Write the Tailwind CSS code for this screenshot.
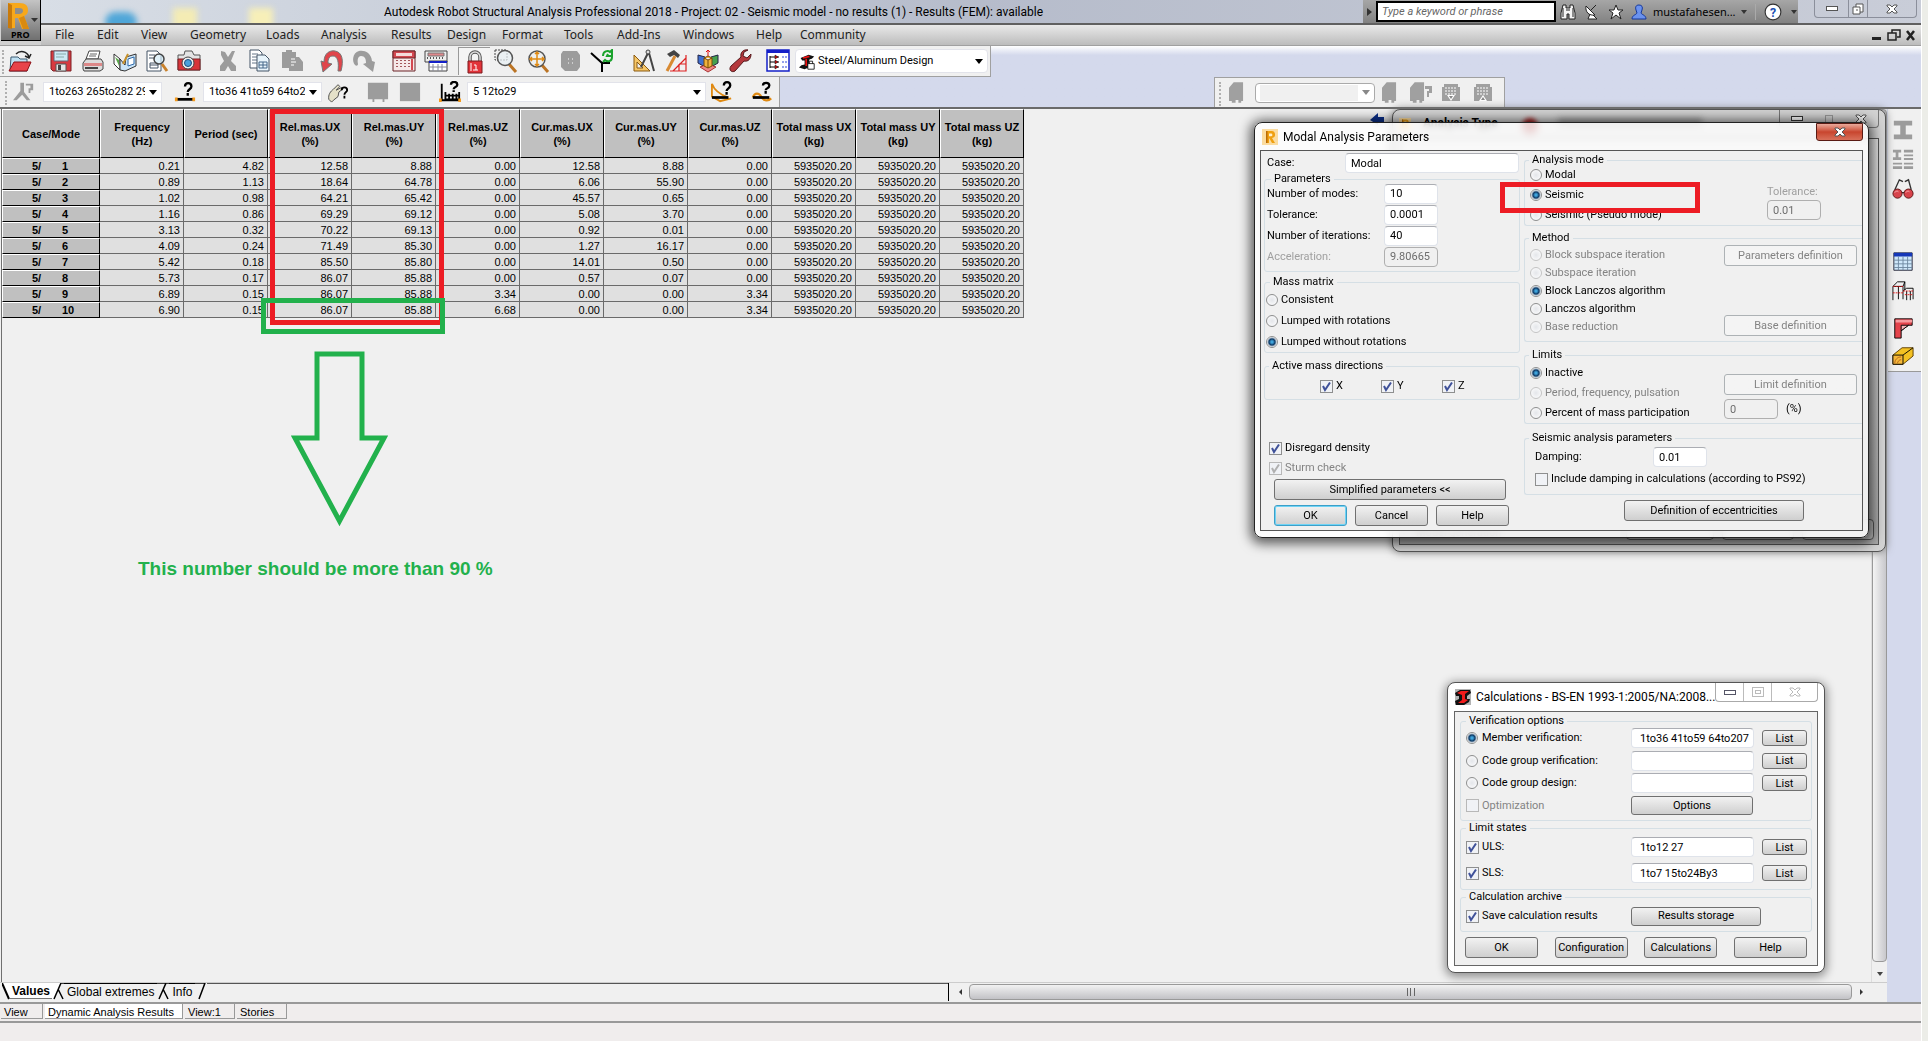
<!DOCTYPE html>
<html lang="en">
<head>
  <meta charset="UTF-8" />
  <title>Autodesk Robot Structural Analysis Professional 2018</title>
  <script src="https://cdn.jsdelivr.net/npm/@tailwindcss/browser@4"></script>
</head>
<body class="h-screen overflow-hidden flex bg-[#ecede8] text-black font-['Roboto',sans-serif] text-[11px] leading-[14px]">

  <!-- shared symbols -->
  <svg class="hidden">
    <symbol id="tick" viewBox="0 0 13 13"><path d="M3 6l2 4 5-7.500" fill="none" stroke="#3f5199" stroke-width="2" /></symbol>
    <symbol id="tickOff" viewBox="0 0 13 13"><path d="M3 6l2 4 5-7.500" fill="none" stroke="#b0b0b0" stroke-width="2" /></symbol>
    <symbol id="robot" viewBox="0 0 16 16">
      <rect width="16" height="16" fill="#fbdca0" />
      <path d="M4 14V2h5a3.500 3.500 0 0 1 1 7l3 5h-3L7.500 9.500H7V14z" fill="#f0a010" />
      <path d="M7 4.500h2a1.300 1.300 0 0 1 0 2.800H7z" fill="#fff0cc" />
      <path d="M4 14V2h1.500v12z" fill="#b96b06" />
    </symbol>
    <symbol id="cross" viewBox="0 0 12 10"><path d="M1 1h3l2 2 2-2h3v1L8 5l3 3v1H8L6 7 4 9H1V8l3-3-3-3z" fill="#fff" stroke="#555" /></symbol>
    <symbol id="sheet" viewBox="0 0 16 22"><path d="M5 0h10v20h-2v2h-3v-3H7v3H3v-2H0V6z" fill="#a0a0a0" /></symbol>
  </svg>

  <div class="flex-1 min-w-0 flex flex-col">

    <!-- title bar and menu -->
    <header class="flex bg-[#d0d0d0] border-b border-[#a0a0a0]">
      <button class="ml-px w-10 h-[41px] border-r border-b border-black bg-linear-to-b from-[#c4c4c4] to-[#707070] relative" aria-label="Application menu">
        <svg viewBox="0 0 40 40" class="w-10 h-10">
          <path d="M7 28V3h11c7 0 9 3 9 7 0 3-1 5-4 6l5 13h-7l-4-11h-3v10z" fill="#f7a81b" />
          <path d="M7 3l4 2v24l-4-1z" fill="#c97a0a" />
          <path d="M14 8h4c3 0 4 1 4 3s-2 3-4 3h-4z" fill="#8e8e8e" />
          <path d="M18 18l4 11h6l-5-13z" fill="#d98a10" />
          <path d="M30 18h7l-3.500 4z" fill="#333" />
          <text x="10" y="38" font-size="9" font-weight="700" font-family="Noto Sans">PRO</text>
        </svg>
      </button>
      <div class="flex-1 min-w-0">
        <div class="h-[25px] flex items-stretch border-b-2 border-[#606060] bg-linear-to-r from-[#d8dee6] via-[#b6bccb] to-[#c9cdd8] relative overflow-hidden">
          <span class="absolute left-16 top-3 w-8 h-5 rounded-full bg-[#4fa6d8] blur-[3px]"></span>
          <span class="absolute left-33 top-2 w-6 h-6 bg-[#f4ecb4] blur-[3px]"></span>
          <span class="absolute left-52 top-2 w-6 h-6 bg-[#f7efb8] blur-[3px]"></span>
          <h1 class="flex-1 min-w-0 pl-[343px] text-[12px] leading-6 whitespace-nowrap relative">Autodesk Robot Structural Analysis Professional 2018 - Project: 02 - Seismic model - no results (1) - Results (FEM): available</h1>
          <div class="w-[435px] shrink-0 flex items-center bg-linear-to-b from-[#a6a6a6] to-[#828282] [&_svg]:mx-auto [&>*]:shrink-0">
            <svg viewBox="0 0 13 12" class="w-[13px] h-3 mx-0!"><path d="M4 2v8l5-4z" fill="#333" /></svg>
            <input type="text" aria-label="Search" placeholder="Type a keyword or phrase" class="w-[180px] h-[21px] px-1 bg-white border-2 border-black text-[11px] italic placeholder:text-[#666]" />
            <button class="w-6" aria-label="Find"><svg viewBox="0 0 16 16" class="size-4"><path d="M3 1h3v3h4V1h3l2 8v6H9v-5H7v5H1V9z" fill="#f4f4f4" stroke="#222" /><path d="M3 4v9M13 4v9M6 6h4" stroke="#222" /></svg></button>
            <button class="w-6" aria-label="Subscription"><svg viewBox="0 0 16 16" class="size-4"><path d="M2 2c-1 6 3 10 9 9zM6 10l-2 5h9l-4-4M7 6l5-5" fill="#fff" stroke="#222" /></svg></button>
            <button class="w-6" aria-label="Favourites"><svg viewBox="0 0 16 16" class="size-4"><path d="M8 1l2 5h5l-4 3 2 6-5-4-5 4 2-6-4-3h5z" fill="#fff" stroke="#222" /></svg></button>
            <button class="w-[124px] pl-[3px] flex items-center whitespace-nowrap font-['Noto_Sans',sans-serif]"><svg viewBox="0 0 16 16" class="size-4 ml-0! mr-[6px]!"><path d="M8 1c3 0 4 2 3 5l-1 3c1 2 5 2 5 6H1c0-4 4-4 5-6L5 6C4 3 5 1 8 1z" fill="#6b92ee" stroke="#16389a" /></svg>mustafahesen...<svg viewBox="0 0 8 6" class="w-2"><path d="M1 1h6L4 5z" fill="#333" /></svg></button>
            <span class="ml-[3px] h-4 border-l border-[#aaa]"></span>
            <button class="ml-2 flex items-center gap-2" aria-label="Help"><svg viewBox="0 0 16 16" class="size-[18px]"><circle cx="8" cy="8" r="7" fill="#fff" stroke="#333" /><text x="8" y="12" text-anchor="middle" font-size="11" font-weight="700" fill="#1b4fb4">?</text></svg><svg viewBox="0 0 8 6" class="w-2"><path d="M1 1h6L4 5z" fill="#333" /></svg></button>
          </div>
          <div class="ml-4 mr-1 w-[103px] h-[18px] shrink-0 flex border border-t-0 border-[#8b8f9b] rounded-b divide-x divide-[#8b8f9b]">
            <button class="w-[34px] grid place-items-center" aria-label="Minimize"><span class="w-3 h-[5px] bg-white border border-[#555]"></span></button>
            <button class="w-[19px] grid place-items-center" aria-label="Restore"><svg viewBox="0 0 12 12" class="size-3"><path d="M4 1h7v8H8v2H1V4h3zM4 4h4v5M4 7h2" fill="#fff" stroke="#555" /></svg></button>
            <button class="flex-1 grid place-items-center" aria-label="Close"><svg class="w-3 h-[10px]"><use href="#cross" /></svg></button>
          </div>
        </div>
        <nav class="h-5 flex items-center bg-linear-to-b from-[#e9e9e9] to-[#bcbcbc] text-[12px] text-[#222] font-['Noto_Sans',sans-serif]">
          <a href="#" class="ml-[14px] w-[42px]">File</a>
          <a href="#" class="w-11">Edit</a>
          <a href="#" class="w-[49px]">View</a>
          <a href="#" class="w-[76px]">Geometry</a>
          <a href="#" class="w-[55px]">Loads</a>
          <a href="#" class="w-[70px]">Analysis</a>
          <a href="#" class="w-14">Results</a>
          <a href="#" class="w-[55px]">Design</a>
          <a href="#" class="w-[62px]">Format</a>
          <a href="#" class="w-[53px]">Tools</a>
          <a href="#" class="w-[66px]">Add-Ins</a>
          <a href="#" class="w-[73px]">Windows</a>
          <a href="#" class="w-11">Help</a>
          <a href="#">Community</a>
          <svg viewBox="0 0 46 14" class="ml-auto mr-1 w-[46px] h-[14px]"><path d="M1 9h9v3H1z" fill="#222" /><path d="M21 5V2h8v7h-3M17 5h8v7h-8z" fill="none" stroke="#222" stroke-width="1.500" /><path d="M36 3l7 9M43 3l-7 9" stroke="#222" stroke-width="2.500" /></svg>
        </nav>
      </div>
    </header>

    <!-- toolbars -->
    <div class="bg-linear-to-b from-white via-[#d4d9ec] via-15% to-[#d4d9ec] border-b-2 border-[#6a6a6a]">
      <div class="w-[991px] h-[31px] pl-1 flex items-center bg-[#f0f0f0] border-r border-b border-[#a0a0a0] [&_svg]:size-6 [&_svg]:mx-auto [&>button]:w-8 [&>button]:shrink-0 relative">
        <span class="absolute left-0.5 top-1 h-6 border-l-2 border-dotted border-[#b0b0b0]"></span>
        <button aria-label="Open"><svg viewBox="0 0 24 24"><path d="M3 8h7l2 2h7v12H2z" fill="#bfe0f2" stroke="#3d5a70" /><path d="M6 13h17l-4 9H1z" fill="#e8434a" stroke="#8c1016" /><path d="M8 5c4-4 11-3 13 3m-4-1l4 2 2-4" fill="none" stroke="#222" stroke-width="1.500" /></svg></button>
        <button class="ml-[9px]" aria-label="Save"><svg viewBox="0 0 24 24"><path d="M2 2h20v20H4l-2-2z" fill="#d83a40" stroke="#7c2025" /><path d="M5 2h14v10H5z" fill="#cdeaf6" stroke="#667" /><path d="M7 5h10M7 8h8" stroke="#8aa" /><path d="M7 15h10v7H7z" fill="#e6e6e6" stroke="#555" /><path d="M9 16h3v5H9z" fill="#444" /></svg></button>
        <button aria-label="Print"><svg viewBox="0 0 24 24"><path d="M8 2h11l-2 8H5z" fill="#fff" stroke="#444" /><path d="M9 5h7M8 7h7" stroke="#666" /><path d="M5 10h15l2 3v7l-3 2H3l-1-2v-6z" fill="#dcdcdc" stroke="#444" /><path d="M3 14h18v3H3z" fill="#d88" /><path d="M4 19h13" stroke="#444" stroke-width="2" /></svg></button>
        <button aria-label="Report"><svg viewBox="0 0 24 24"><path d="M1 5l6 5v11l-6-6z" fill="#fff" stroke="#333" /><path d="M2 8l4 3v6z" fill="#5aa84a" /><path d="M7 10l5 6 1-8 10-3v12l-11 5-5-1z" fill="#cbe4f7" stroke="#333" /><path d="M15 10l6-2v7l-6 2z" fill="#fff" stroke="#2a68a8" /><path d="M10 15l5-10" stroke="#c7912b" stroke-width="2" /></svg></button>
        <button aria-label="Preview"><svg viewBox="0 0 24 24"><path d="M2 2h10l4 4v16H2z" fill="#fff" stroke="#456" /><path d="M4 6h6M4 9h6M5 19v-5h8v5zM5 16h8" stroke="#456" fill="none" /><path d="M17 15l5 7" stroke="#c8812b" stroke-width="3" /><circle cx="14" cy="10" r="5" fill="#d2ecf8aa" stroke="#444" stroke-width="1.500" /></svg></button>
        <button aria-label="Screen capture"><svg viewBox="0 0 24 24"><path d="M8 2h7l2 4h6v15H1V6h6z" fill="#e4e4e4" stroke="#555" /><path d="M1 10h22v11H1z" fill="#d8343a" stroke="#7c2025" /><circle cx="11" cy="14" r="6" fill="#eee" stroke="#444" /><circle cx="11" cy="14" r="3.500" fill="#4aa0dc" stroke="#1d4d7c" /></svg></button>
        <button class="ml-[7px]" aria-label="Cut"><svg viewBox="0 0 24 24"><path d="M5 2l4 1 3 5 4-6h3l-4 10 5 5v5h-5l-3-5-3 5H4v-5l4-5-3-6z" fill="#9c9c9c" /></svg></button>
        <button aria-label="Copy"><svg viewBox="0 0 24 24"><path d="M2 1h9l3 3v15H2z" fill="#fff" stroke="#456" /><path d="M4 5h6M4 8h5M4 11h5M4 14h5" stroke="#678" /><path d="M9 6h8l4 4v12H9z" fill="#e8f4fb" stroke="#456" /><path d="M11 13h8v6h-8zM11 16h8M15 13v6" stroke="#468" fill="none" /></svg></button>
        <button aria-label="Paste"><svg viewBox="0 0 24 24"><path d="M2 3h4V1h6v2h4v5h3l4 5v9h-14v-3H2z" fill="#9c9c9c" /><path d="M11 10h4M11 13h5M11 16h3" stroke="#fff" /></svg></button>
        <button class="ml-2" aria-label="Undo"><svg viewBox="0 0 24 24"><path d="M1 12l3 1C4 4 10 1 15 2c7 1 9 9 6 20h-3c1-8 0-15-5-15-4 0-5 3-5 7l4 1-9 8z" fill="#e0454b" stroke="#777" /></svg></button>
        <button aria-label="Redo"><svg viewBox="0 0 24 24"><path d="M23 13l-3-1C19 3 12 1 7 2 0 4 0 13 3 16c1 1 3 1 3-1-1-4 0-8 3-8 4 0 5 3 5 7l-3 1 10 8z" fill="#9c9c9c" /></svg></button>
        <button class="ml-2" aria-label="Calculate"><svg viewBox="0 0 24 24"><path d="M1 2h22v20H1z" fill="#f6e8e8" stroke="#6b2227" /><path d="M1 2h22v7H1z" fill="#d34850" stroke="#6b2227" /><path d="M4 4h16v3H4z" fill="#f4dada" /><path d="M5 11v9M9 11v9M13 11v9M17 11v9" stroke="#a4565a" stroke-width="2" stroke-dasharray="1 2" /><path d="M20 10v11" stroke="#d34850" stroke-width="2" /></svg></button>
        <button aria-label="Calculation table"><svg viewBox="0 0 24 24"><path d="M1 2h22v11H1z" fill="#eee" stroke="#444" /><path d="M4 4h16v3H4z" fill="#e0888c" stroke="#777" /><path d="M3 9h18" stroke="#555" stroke-width="2" stroke-dasharray="1 2" /><path d="M5 12h18v10H5z" fill="#fff" stroke="#444" /><path d="M5 12h18v2H5z" fill="#1420c8" /><path d="M5 18h18M9 15v7M14 15v7M18 15v7" stroke="#889" /></svg></button>
        <span class="ml-[6px] h-7 w-8 grid place-items-center border-l border-t border-[#999] bg-[#f4f4f4]"><button aria-label="Lock results"><svg viewBox="0 0 24 24"><path d="M7 11V7a5 5 0 0 1 10 0v4" fill="none" stroke="#555" stroke-width="3.500" /><path d="M7 11V7a5 5 0 0 1 10 0v4" fill="none" stroke="#ddd" stroke-width="1.500" /><path d="M5 11h14v12H5z" fill="#e2343a" stroke="#7c1a1e" /><path d="M7 13h2v8H7z" fill="#f29a9d" /><path d="M11 15h2v5M10 20h5" stroke="#fff" fill="none" /></svg></button></span>
        <button aria-label="Zoom window"><svg viewBox="0 0 24 24"><path d="M1 1h12v10H1z" fill="#eee" stroke="#444" stroke-dasharray="2 1" /><path d="M15 15l7 8" stroke="#bb7425" stroke-width="3" /><circle cx="11" cy="9" r="7.500" fill="#e8f0f4bb" stroke="#555" stroke-width="1.500" /></svg></button>
        <button aria-label="Zoom all"><svg viewBox="0 0 24 24"><path d="M15 15l7 8" stroke="#bb7425" stroke-width="3" /><circle cx="11" cy="10" r="8" fill="#eef0f0" stroke="#555" stroke-width="1.500" /><path d="M11 3v14M4 10h14M9 5l2-2 2 2M9 15l2 2 2-2M6 8l-2 2 2 2M16 8l2 2-2 2" fill="none" stroke="#e08a12" stroke-width="1.500" /></svg></button>
        <button aria-label="Rotate"><svg viewBox="0 0 24 24"><path d="M5 2h14l3 4v12l-3 4H7l-4-4V5z" fill="#9c9c9c" /><path d="M10 10h1M14 10h1M10 14h1M14 14h1" stroke="#fff" /></svg></button>
        <button aria-label="Redraw axes"><svg viewBox="0 0 24 24"><path d="M1 4l11 10v9M12 14h8" fill="none" stroke="#000" stroke-width="2" /><path d="M13 7c0-5 5-6 7-4l2-2v6h-5l1-2M22 8c0 5-5 5-7 3l-2 2" fill="none" stroke="#1aa32c" stroke-width="2" /></svg></button>
        <button class="ml-[10px]" aria-label="Units"><svg viewBox="0 0 24 24"><path d="M2 6v16h16z" fill="#f6c667" stroke="#8a5a10" /><path d="M5 13v6h6z" fill="#f0f0f0" stroke="#8a5a10" /><path d="M16 4L9 18M17 4l5 18" stroke="#444" stroke-width="2" /><circle cx="16" cy="3" r="2" fill="#ddd" stroke="#444" /></svg></button>
        <button aria-label="Correct model"><svg viewBox="0 0 24 24"><path d="M22 6v16H6M22 9L9 22M15 15v7M15 15h7" stroke="#d22" fill="none" stroke-width="1.200" /><path d="M3 5l7-4 6 5-2 3-4-3-4 2z" fill="#444" /><path d="M11 7L3 22" stroke="#d88a32" stroke-width="3" /></svg></button>
        <button aria-label="Views"><svg viewBox="0 0 24 24"><path d="M2 6l7 2v10l-7-4z" fill="#4070d0" stroke="#224" /><path d="M22 6l-7 2v10l7-4z" fill="#46a04e" stroke="#224" /><path d="M4 18l8 5 8-5-8-3z" fill="#e88" stroke="#a33" /><path d="M8 9l4-2 4 2v8l-4 2-4-2zM12 11v8M8 9l4 2 4-2" fill="#f0b23c" stroke="#7a4a08" /><path d="M12 1v6M10 3l2-2 2 2" stroke="#d11" fill="none" /></svg></button>
        <button aria-label="Preferences"><svg viewBox="0 0 24 24"><path d="M20 1c-5-1-8 3-7 7L3 17c-3 4 1 7 4 5l9-10c4 1 7-2 7-7l-4 4-4-2 1-4z" fill="#b5383c" stroke="#54181b" /></svg></button>
        <button class="ml-[6px]" aria-label="Inspector"><svg viewBox="0 0 24 24"><path d="M1 1h22v21H1z" fill="#fff" stroke="#1420c8" stroke-width="1.500" /><path d="M1 1h22v3H1z" fill="#1420c8" /><path d="M4 7v12M4 8h9M4 13h9M4 18h9" stroke="#000" /><path d="M9 6l3 2-3 2zM9 11l3 2-3 2zM9 16l3 2-3 2z" fill="#d11" stroke="#000" stroke-width=".5" /><path d="M16 8h5M16 13h5M16 18h5" stroke="#2a46d8" stroke-dasharray="2 1" /></svg></button>
        <div class="ml-px flex-1 mr-0.5 h-6 flex items-center bg-white border border-[#e2e3ea] rounded-sm relative">
          <svg viewBox="0 0 20 20" class="absolute left-[3px] top-1 size-4!"><path d="M2 5l10-4 7 2-3 3-3 1-1 6 4 2-9 4-7-2 3-3 4-1V8H4z" fill="#111" /><path d="M5 5l8-2M9 6v9" stroke="#e11" stroke-width="2" /><path d="M11 12h8v7h-8zM13 12V9h4v3" fill="#fff" stroke="#000" /></svg>
          <select aria-label="Layout" class="appearance-none w-full pl-[22px]"><option>Steel/Aluminum Design</option></select>
          <svg viewBox="0 0 8 5" class="absolute right-1 w-2! h-[5px]! pointer-events-none"><path d="M0 0h8L4 5z" /></svg>
        </div>
      </div>
      <div class="flex justify-between">
        <div class="w-[780px] h-[30px] pl-2 flex items-center bg-[#f0f0f0] border-r border-[#a0a0a0] [&>button]:w-8 [&>button]:shrink-0 [&>button>svg]:size-[22px] [&>button>svg]:mx-auto relative">
          <span class="absolute left-[5px] top-1 h-6 border-l-2 border-dotted border-[#b0b0b0]"></span>
          <button aria-label="Select nodes"><svg viewBox="0 0 24 24"><path d="M8 2h4v10l7 9h-4l-5-6-6 6H0l8-10zM14 3h8v7h-3v3h-2V8h2V5h-5z" fill="#9c9c9c" /></svg></button>
          <div class="ml-[3px] w-[119px] h-5 flex items-center bg-white border border-[#e2e3ea] relative">
            <select aria-label="Node list" class="appearance-none w-full pl-[5px] pr-4"><option>1to263 265to282 29</option></select>
            <svg viewBox="0 0 8 5" class="absolute right-1 w-2 h-[5px] pointer-events-none"><path d="M0 0h8L4 5z" /></svg>
          </div>
          <button class="ml-[7px]" aria-label="Select bars"><svg viewBox="0 0 24 24"><path d="M2 20h20" stroke="#000" stroke-width="3" /><path d="M1 18h3v4H1zM20 18h3v4h-3z" fill="#f39a1e" /><path d="M12 6c0-5 7-5 7 0 0 3-4 3-4 6M15 13v3" fill="none" stroke="#000" stroke-width="2.500" /></svg></button>
          <div class="ml-0.5 w-[119px] h-5 flex items-center bg-white border border-[#e2e3ea] relative">
            <select aria-label="Bar list" class="appearance-none w-full pl-[5px] pr-4 text-clip"><option>1to36 41to59 64to2</option></select>
            <svg viewBox="0 0 8 5" class="absolute right-1 w-2 h-[5px] pointer-events-none"><path d="M0 0h8L4 5z" /></svg>
          </div>
          <button aria-label="Pick"><svg viewBox="0 0 24 24"><path d="M2 20c-1-5 2-9 5-11l5-5 2 2-4 4 6-3 1 2-4 3-1 5-5 4-2 2z" fill="#e4e0c8" stroke="#444" /><path d="M16 10c0-4 6-4 6 0 0 2-3 2-3 5M19 16v3" fill="none" stroke="#000" stroke-width="2" /></svg></button>
          <button class="ml-2" aria-label="View cases"><svg viewBox="0 0 24 24"><path d="M1 2h22v18h-4v3h-2v-3H8v3H6v-3H1z" fill="#9c9c9c" /></svg></button>
          <button aria-label="View modes"><svg viewBox="0 0 24 24"><path d="M1 2h22v20H1z" fill="#9c9c9c" /></svg></button>
          <button class="ml-2" aria-label="Select cases"><svg viewBox="0 0 24 24"><path d="M3 3v18M7 12v8h15v-8M7 16h15M11 14v6M15 14v6M19 14v6M1 21h22" stroke="#000" stroke-width="2" fill="none" /><path d="M0 19h3v4H0zM21 19h3v4h-3z" fill="#f39a1e" /><path d="M13 4c0-4 7-4 7 0 0 3-4 2-4 5M16 10v2" fill="none" stroke="#000" stroke-width="2.500" /></svg></button>
          <div class="ml-px w-[239px] h-5 flex items-center bg-white border border-[#e2e3ea] relative">
            <select aria-label="Case list" class="appearance-none w-full pl-[5px] pr-4"><option>5 12to29</option></select>
            <svg viewBox="0 0 8 5" class="absolute right-1 w-2 h-[5px] pointer-events-none"><path d="M0 0h8L4 5z" /></svg>
          </div>
          <button aria-label="Diagram values"><svg viewBox="0 0 24 24"><path d="M1 3c3 8 9 12 18 15M1 3v14l9 5 12-3" fill="none" stroke="#e08a12" stroke-width="2" /><path d="M1 18h18" stroke="#000" stroke-width="3" /><path d="M14 5c0-5 7-5 7 0 0 3-4 3-4 6M17 12v3" fill="none" stroke="#000" stroke-width="2.500" /></svg></button>
          <button class="ml-2" aria-label="Deformation values"><svg viewBox="0 0 24 24"><path d="M2 18c2-6 7-5 9-1s7 6 11 2" fill="none" stroke="#e08a12" stroke-width="2.500" /><path d="M2 18h18" stroke="#000" stroke-width="3" /><path d="M13 5c0-4 7-4 7 0 0 3-4 3-4 5M16 11v3" fill="none" stroke="#000" stroke-width="2.500" /></svg></button>
        </div>
        <div class="w-[291px] mr-[416px] h-[30px] pl-[14px] flex items-center bg-[#f0f0f0] border border-b-0 border-[#a0a0a0] relative">
          <span class="absolute left-1 top-1 h-6 border-l-2 border-dotted border-[#b0b0b0]"></span>
          <svg class="w-[15px] h-[21px]"><use href="#sheet" /></svg>
          <div class="ml-[11px] w-[120px] h-5 flex items-center bg-white border border-[#aaa] rounded-sm relative">
            <select aria-label="Section list" disabled class="appearance-none ml-1 w-[98px] h-4 bg-[#f0f0f0]"></select>
            <svg viewBox="0 0 8 5" class="absolute right-1 w-2 h-[5px]"><path d="M0 0h8L4 5z" fill="#888" /></svg>
          </div>
          <svg class="ml-[7px] w-[15px] h-[21px]"><use href="#sheet" /></svg>
          <svg class="ml-[13px] w-[15px] h-[21px]"><use href="#sheet" /></svg>
          <svg viewBox="0 0 8 20" class="w-2 h-5"><path d="M0 3h7v7H4v4H2V8h2V6H0z" fill="#a0a0a0" /></svg>
          <svg viewBox="0 0 20 20" class="ml-2 size-5"><path d="M3 1h14v3h2v14H1V4h2z" fill="#a0a0a0" /><path d="M4 5h12M4 8h12M4 11h12" stroke="#fff" stroke-dasharray="2 1" /><path d="M6 12h8l-4 6z" fill="#fff" /><path d="M8 13h4l-2 3z" fill="#888" /></svg>
          <svg viewBox="0 0 20 20" class="ml-3 size-5"><path d="M3 1h14v3h2v14H1V4h2z" fill="#a0a0a0" /><path d="M4 5h12M4 8h12M4 11h12" stroke="#fff" stroke-dasharray="2 1" /><path d="M6 18h8l-4-6z" fill="#fff" /><path d="M8 17h4l-2-3z" fill="#888" /></svg>
        </div>
      </div>
    </div>

    <!-- workspace -->
    <div class="flex-1 min-h-0 flex bg-[#d4d9ec]">
      <div class="flex-1 min-w-0 flex flex-col bg-[#f0f0f0]">
        <main class="flex-1 min-h-0 flex justify-between">
          <section class="ml-px flex-1 border-l border-[#707070]">
            <table class="table-fixed w-[1022px] border-separate border-spacing-0 font-['Liberation_Sans',Arial,sans-serif] leading-[14px]">
              <colgroup>
                <col class="w-[98px]" /><col span="11" class="w-[84px]" />
              </colgroup>
              <thead id="modesHead"></thead>
              <tbody id="modesBody"></tbody>
            </table>
          </section>
          <div class="w-4 flex flex-col items-center border-l border-[#ddd]">
            <span class="flex-1 w-[15px] bg-linear-to-r from-[#f4f4f4] to-[#c8c8cc] border border-[#999] rounded-sm"></span>
            <svg viewBox="0 0 16 20" class="w-4 h-5"><path d="M5 10h6l-3 4z" fill="#444" /></svg>
          </div>
        </main>
        <div class="h-5 flex border-t border-[#ccc]">
          <div class="w-[949px] h-[18px] flex border-r border-black text-[12px] leading-4 font-['Liberation_Sans',Arial,sans-serif]">
            <svg viewBox="0 0 8 17" class="ml-0.5 w-2 h-[17px]"><path d="M0 0h8v16H7z" fill="#fff" /><path d="M0 0l7 16" stroke="#000" stroke-width="2" /></svg>
            <button class="h-4 px-0.5 bg-white border-b border-[#777] font-bold">Values</button>
            <svg viewBox="0 0 12 17" class="w-3 h-[17px]"><path d="M0 0h9L2 16H0z" fill="#fff" /><path d="M9 0L2 16M6 6l5 10M9 0h3" stroke="#000" stroke-width="1.500" fill="none" /></svg>
            <button class="h-4 px-[3px] border-t border-black leading-[14px]">Global extremes</button>
            <svg viewBox="0 0 12 17" class="w-3 h-[17px]"><path d="M0 0h9L2 16M6 6l5 10M9 0h3" stroke="#000" stroke-width="1.500" fill="none" /></svg>
            <button class="h-4 px-[3px] border-t border-black leading-[14px]">Info</button>
            <svg viewBox="0 0 12 17" class="w-3 h-[17px]"><path d="M0 0h10L4 16" stroke="#000" stroke-width="1.500" fill="none" /></svg>
            <span class="flex-1 border-t border-[#555]"></span>
          </div>
          <svg viewBox="0 0 16 18" class="ml-1 w-4 h-[18px]"><path d="M9 6v6L6 9z" fill="#333" /></svg>
          <div class="flex-1 h-4 mt-px grid place-items-center border border-[#999] rounded-sm bg-linear-to-b from-[#f2f2f2] to-[#c2c2c6]"><span class="w-2 h-2 border-x border-[#666] grid place-items-center"><i class="w-px h-2 bg-[#666]"></i></span></div>
          <svg viewBox="0 0 16 18" class="mr-[19px] w-4 h-[18px]"><path d="M8 6v6l3-3z" fill="#333" /></svg>
        </div>
      </div>

      <aside class="w-[34px] pl-px">
        <div class="h-[263px] border-b border-[#999] bg-[#f0f0f0] flex flex-col items-center pt-2.5 pr-[3px] [&_svg]:size-[22px]">
          <button aria-label="Sections"><svg viewBox="0 0 24 24"><path d="M2 2h20v5h-7v10h7v5H2v-5h7V7H2z" fill="#9c9c9c" /></svg></button>
          <button class="mt-[7px]" aria-label="Section list"><svg viewBox="0 0 24 24"><path d="M1 2h9v3H7v5h3v3H1v-3h3V5H1zM13 2h10v3H13zM13 7h10v2H13zM13 11h10v2H13zM1 16h10v2H1zM13 16h10v2H13zM1 20h10v3H1zM13 20h10v3H13z" fill="#9c9c9c" /></svg></button>
          <button class="mt-2" aria-label="Member types"><svg viewBox="0 0 24 24"><path d="M3 13L8 2l4 2M21 13l-3-11-4 2M10 16h4" fill="none" stroke="#333" stroke-width="1.500" /><circle cx="6" cy="17" r="5" fill="#d8434b" stroke="#511" /><circle cx="18" cy="17" r="5" fill="#d8434b" stroke="#511" /><path d="M3 16c1-2 3-2 4-1M15 16c1-2 3-2 4-1" stroke="#f7b5b7" fill="none" /></svg></button>
          <button class="mt-[51px]" aria-label="Tables"><svg viewBox="0 0 24 24"><path d="M2 2h20v19H2z" fill="#cfe8fb" stroke="#223" /><path d="M2 2h20v4H2z" fill="#1537b8" /><path d="M2 10h20M2 14h20M2 18h20M7 6v15M12 6v15M17 6v15" stroke="#6d88a0" /></svg></button>
          <button class="mt-[7px]" aria-label="Structure"><svg viewBox="0 0 24 24"><path d="M1 7l5-5h8l-2 5H1v15M12 7v14M7 7v14M14 2v9M12 12l4-3h7v12M16 22V12M20 12v10" fill="none" stroke="#000" /><path d="M1 7h11M1 14h11M12 12h11M14 16h9" stroke="#d11" stroke-dasharray="2 1" /></svg></button>
          <button class="mt-[15px]" aria-label="Connections"><svg viewBox="0 0 24 24"><path d="M3 2h19v7h-4l-8 6v8H3z" fill="#e4434b" stroke="#000" /><path d="M4 3h18v3H4z" fill="#f59a9e" /><path d="M10 9h8l-8 6z" fill="#f7b5b7" stroke="#000" /></svg></button>
          <button class="mt-[6px]" aria-label="Timber design"><svg viewBox="0 0 24 24"><path d="M1 11L11 3h12v9l-11 9H1z" fill="#f4c122" stroke="#5a3a00" /><path d="M1 11h11v10H1z" fill="#f6b93a" stroke="#000" /><path d="M12 11l11-8" stroke="#000" /><path d="M3 20c0-4 3-7 7-7M6 20c0-2 2-4 4-4" fill="none" stroke="#b6641c" /></svg></button>
        </div>
      </aside>
    </div>

    <!-- view tabs and status bar -->
    <footer class="h-[39px] bg-[#f0eded] border-t-2 border-[#999]">
      <div class="h-[19px] pb-0.5 flex items-stretch border-b-2 border-[#999] gap-0.5 [&>button]:text-left [&>button]:pl-[3px] [&>button]:border-r [&>button]:border-b [&>button]:border-[#999] font-['Liberation_Sans',Arial,sans-serif] leading-4">
        <button class="ml-px w-[42px]">View</button>
        <button class="w-[138px] bg-white">Dynamic Analysis Results</button>
        <button class="w-[50px]">View:1</button>
        <button class="w-[50px]">Stories</button>
      </div>
    </footer>
  </div>
  <div class="w-[7px] border-l border-white"></div>

  <!-- markup drawn over the results -->
  <div class="absolute left-[270px] top-[109px] w-[174px] h-[216px] border-5 border-[#ed1c24]"></div>
  <div class="absolute left-[261px] top-[298px] w-[184px] h-9 border-5 border-[#22b14c]"></div>
  <svg viewBox="0 0 100 180" class="absolute left-[290px] top-[348px] w-[100px] h-[180px]"><path d="M27 6h45v84h22L49.500 173 5 90h22z" fill="none" stroke="#22b14c" stroke-width="5" /></svg>
  <p class="absolute left-[138px] top-[557px] text-[19px] leading-6 font-bold text-[#22b14c] font-['Liberation_Sans',Arial,sans-serif]">This number should be more than 90 %</p>

  <!-- window behind the modal parameters -->
  <svg viewBox="0 0 14 12" class="absolute left-[1370px] top-[113px] w-[14px] h-3"><path d="M0 7l8-7v4h6v6H8v2z" fill="#0b2f8a" /></svg>
  <div class="absolute left-[1392px] top-[109px] w-[494px] h-[443px] rounded-lg border border-[#555] bg-[#d2d2d2] shadow-[0_0_8px_#777] p-[6px] pt-0">
    <div class="h-7 flex items-start">
      <svg class="mt-2 size-3"><use href="#robot" /></svg>
      <span class="ml-3 mt-1.5 text-[12px] font-bold">Analysis Type</span>
      <span class="ml-6 mt-2 size-4 rounded-full bg-[#a02020] blur-[2px]"></span>
      <span class="ml-5 mt-2 w-36 h-2 bg-[#999] blur-[3px]"></span>
      <div class="ml-auto w-[100px] h-[18px] flex items-center justify-around border border-t-0 border-[#777] rounded-b">
        <span class="w-3 h-[5px] border border-[#333] bg-white"></span><span class="size-2 border border-[#999]"></span><svg class="w-3 h-[10px]"><use href="#cross" /></svg>
      </div>
    </div>
    <div class="h-[407px] border border-[#555] bg-linear-to-b from-[#e0e0e0] to-[#a8a8a8] flex items-end gap-2 px-1 pb-1">
      <span class="text-[#555] mr-auto pl-3">Model generation</span>
      <span class="w-[88px] h-[21px] rounded-sm border border-[#555] bg-[#bbb]"></span>
      <span class="w-[72px] h-[21px] rounded-sm border border-[#555] bg-[#bbb]"></span>
      <span class="w-[72px] h-[21px] rounded-sm border border-[#555] bg-[#bbb]"></span>
    </div>
  </div>

  <!-- Modal Analysis Parameters -->
  <form class="absolute left-[1254px] top-[122px] w-[615px] rounded-lg border border-[#222] bg-white/80 backdrop-blur-[3px] shadow-[0_2px_12px_4px_#0009] px-[5px] pb-[6px]
    [&_fieldset]:border [&_fieldset]:border-[#d5dfe5] [&_fieldset]:rounded-[3px] [&_legend]:ml-1 [&_legend]:px-[3px]
    [&_label]:flex [&_label]:items-center [&_label]:whitespace-nowrap
    [&_[type=radio]]:appearance-none [&_[type=radio]]:size-3 [&_[type=radio]]:mr-[3px] [&_[type=radio]]:rounded-full [&_[type=radio]]:border [&_[type=radio]]:border-[#8e8f8f] [&_[type=radio]]:bg-[radial-gradient(#e4e6ea,#fff)]
    [&_[type=radio]:checked]:bg-[radial-gradient(#3ea4dc_0_1px,#0e3a66_3px,#fff_5px)] [&_[type=radio]:disabled]:border-[#c4c4c4]
    [&_[type=checkbox]]:appearance-none [&_[type=checkbox]]:size-[13px] [&_[type=checkbox]]:mr-[3px] [&_[type=checkbox]]:border [&_[type=checkbox]]:border-[#8e8f8f] [&_[type=checkbox]]:bg-[#f0f2f6] [&_[type=checkbox]:disabled]:border-[#b8b8b8]
    [&_[type=text]]:w-[54px] [&_[type=text]]:h-5 [&_[type=text]]:px-[5px] [&_[type=text]]:bg-white [&_[type=text]]:border [&_[type=text]]:border-[#dfe3ea] [&_[type=text]]:border-t-[#abadb3] [&_[type=text]]:rounded-sm
    [&_[type=text]:disabled]:bg-[#f0f0f0] [&_[type=text]:disabled]:border-[#afafaf] [&_[type=text]:disabled]:text-[#6d6d6d]
    [&_button]:h-[21px] [&_button]:rounded-[3px] [&_button]:border [&_button]:border-[#707070] [&_button]:bg-linear-to-b [&_button]:from-[#f2f2f2] [&_button]:to-[#cfcfcf] [&_button:disabled]:from-[#f4f4f4] [&_button:disabled]:to-[#f4f4f4] [&_button:disabled]:text-[#838383] [&_button:disabled]:border-[#adb2b5]">
    <div class="h-[27px] flex items-start">
      <svg class="ml-0.5 mt-1.5 size-4"><use href="#robot" /></svg>
      <h2 class="ml-[5px] mt-1.5 text-[12px] leading-4">Modal Analysis Parameters</h2>
      <button type="button" class="ml-auto w-[47px] h-[18px]! grid place-items-center rounded-t-none! border-[#5a1b14]! from-[#e9a99b]! via-[#c8452e] to-[#d8705a]!" aria-label="Close"><svg class="w-3 h-[10px]"><use href="#cross" /></svg></button>
    </div>
    <div class="h-[381px] flex border border-[#555] bg-[#f0f0f0]">
      <div class="w-[260px] pl-[3px] pt-0.5">
        <div class="h-5 pl-[3px] flex items-center"><label for="case" class="w-[78px]">Case:</label><input id="case" type="text" value="Modal" class="w-[174px]! px-1" /></div>
        <fieldset class="w-[256px] pl-0.5 pb-1 -mt-px">
          <legend>Parameters</legend>
          <div class="-mt-[3px] h-[21px] flex items-center"><label for="modes" class="w-[117px]">Number of modes:</label><input id="modes" type="text" value="10" /></div>
          <div class="h-[21px] flex items-center"><label for="tol" class="w-[117px]">Tolerance:</label><input id="tol" type="text" value="0.0001" /></div>
          <div class="h-[21px] flex items-center"><label for="iter" class="w-[117px]">Number of iterations:</label><input id="iter" type="text" value="40" /></div>
          <div class="h-[21px] flex items-center"><label for="acc" class="w-[117px] text-[#a0a0a0]">Acceleration:</label><input id="acc" type="text" value="9.80665" disabled /></div>
        </fieldset>
        <fieldset class="w-[256px] pl-px mt-[3px] [&_label]:h-[21px]">
          <legend class="ml-[5px]">Mass matrix</legend>
          <label><input type="radio" name="mass" />Consistent</label>
          <label><input type="radio" name="mass" />Lumped with rotations</label>
          <label><input type="radio" name="mass" checked />Lumped without rotations</label>
        </fieldset>
        <fieldset class="w-[256px] mt-[6px]">
          <legend>Active mass directions</legend>
          <div class="pl-[55px] h-[26px] flex items-center [&>label]:w-[61px]">
            <label class="relative"><input type="checkbox" checked /><svg class="absolute left-0 size-[13px] pointer-events-none"><use href="#tick" /></svg>X</label>
            <label class="relative"><input type="checkbox" checked /><svg class="absolute left-0 size-[13px] pointer-events-none"><use href="#tick" /></svg>Y</label>
            <label class="relative"><input type="checkbox" checked /><svg class="absolute left-0 size-[13px] pointer-events-none"><use href="#tick" /></svg>Z</label>
          </div>
        </fieldset>
        <div class="mt-[38px] pl-[5px] [&>label]:h-5">
          <label class="relative"><input type="checkbox" checked /><svg class="absolute left-0 size-[13px] pointer-events-none"><use href="#tick" /></svg>Disregard density</label>
          <label class="relative text-[#838383]"><input type="checkbox" checked disabled /><svg class="absolute left-0 size-[13px] pointer-events-none"><use href="#tickOff" /></svg>Sturm check</label>
        </div>
        <div class="pl-[10px] pt-px">
          <button type="button" class="w-[232px]">Simplified parameters &lt;&lt;</button>
          <div class="mt-[5px] flex gap-2 [&>button]:w-[73px]">
            <button type="submit" class="border-[#3c9fc8]! shadow-[inset_0_0_0_1px_#6ed3f5]">OK</button>
            <button type="button">Cancel</button>
            <button type="button">Help</button>
          </div>
        </div>
      </div>
      <div class="flex-1 pl-[3px] pt-0.5 [&>fieldset]:border-r-0 [&>fieldset]:rounded-r-none [&>fieldset]:pl-[5px] [&>fieldset]:flex [&>fieldset]:justify-between">
        <fieldset>
          <legend class="-ml-px!">Analysis mode</legend>
          <div class="-mt-[2px] [&>label]:h-5">
            <label><input type="radio" name="mode" />Modal</label>
            <label><input type="radio" name="mode" checked />Seismic</label>
            <label><input type="radio" name="mode" />Seismic (Pseudo mode)</label>
          </div>
          <div class="mr-[41px] mt-[16px]">
            <label for="tol2" class="h-[17px] text-[#a0a0a0]">Tolerance:</label>
            <input id="tol2" type="text" value="0.01" disabled />
          </div>
        </fieldset>
        <fieldset class="mt-[5px] pb-[5px]">
          <legend class="-ml-px!">Method</legend>
          <div class="pt-px [&>label]:h-[18px]">
            <label class="text-[#838383]"><input type="radio" name="method" disabled />Block subspace iteration</label>
            <label class="text-[#838383]"><input type="radio" name="method" disabled />Subspace iteration</label>
            <label><input type="radio" name="method" checked />Block Lanczos algorithm</label>
            <label><input type="radio" name="method" />Lanczos algorithm</label>
            <label class="text-[#838383]"><input type="radio" name="method" disabled />Base reduction</label>
          </div>
          <div class="mr-[5px] w-[133px] flex flex-col justify-between">
            <button type="button" disabled>Parameters definition</button>
            <button type="button" disabled>Base definition</button>
          </div>
        </fieldset>
        <fieldset class="mt-[6px]">
          <legend class="-ml-px!">Limits</legend>
          <div class="pt-px [&>label]:h-5">
            <label><input type="radio" name="limits" checked />Inactive</label>
            <label class="text-[#838383]"><input type="radio" name="limits" disabled />Period, frequency, pulsation</label>
            <label><input type="radio" name="limits" />Percent of mass participation</label>
          </div>
          <div class="mr-[5px] pt-[12px] w-[133px]">
            <button type="button" disabled class="w-full">Limit definition</button>
            <label class="mt-1 gap-2"><input type="text" value="0" disabled />(%)</label>
          </div>
        </fieldset>
        <fieldset class="mt-[7px] pb-[5px]">
          <legend class="-ml-px!">Seismic analysis parameters</legend>
          <div class="pl-[5px] pt-[2px]">
            <div class="h-5 flex items-center"><label for="damp" class="w-[118px]">Damping:</label><input id="damp" type="text" value="0.01" /></div>
            <label class="mt-0.5 h-5"><input type="checkbox" />Include damping in calculations (according to PS92)</label>
          </div>
        </fieldset>
        <button type="button" class="ml-[100px] mt-[5px] w-[180px]">Definition of eccentricities</button>
      </div>
    </div>
  </form>
  <div class="absolute left-[1500px] top-[182px] w-[200px] h-[31px] border-5 border-[#ed1c24] pointer-events-none"></div>

  <!-- Calculations -->
  <form class="absolute left-[1447px] top-[682px] w-[378px] rounded-lg border border-[#555] bg-white shadow-[0_2px_10px_2px_#0006] px-[6px] pb-[6px]
    [&_fieldset]:border [&_fieldset]:border-[#d5dfe5] [&_fieldset]:rounded-[3px] [&_fieldset]:pl-[5px] [&_legend]:px-[3px]
    [&_label]:flex [&_label]:items-center [&_label]:whitespace-nowrap [&_label]:w-[165px]
    [&_[type=radio]]:appearance-none [&_[type=radio]]:size-3 [&_[type=radio]]:mr-[4px] [&_[type=radio]]:rounded-full [&_[type=radio]]:border [&_[type=radio]]:border-[#8e8f8f] [&_[type=radio]]:bg-[radial-gradient(#e4e6ea,#fff)]
    [&_[type=radio]:checked]:bg-[radial-gradient(#3ea4dc_0_1px,#0e3a66_3px,#fff_5px)]
    [&_[type=checkbox]]:appearance-none [&_[type=checkbox]]:size-[13px] [&_[type=checkbox]]:mr-[3px] [&_[type=checkbox]]:border [&_[type=checkbox]]:border-[#8e8f8f] [&_[type=checkbox]]:bg-[#f0f2f6] [&_[type=checkbox]:disabled]:border-[#b8b8b8]
    [&_[type=text]]:w-[123px] [&_[type=text]]:h-5 [&_[type=text]]:pl-2 [&_[type=text]]:bg-white [&_[type=text]]:border [&_[type=text]]:border-[#dfe3ea] [&_[type=text]]:border-t-[#abadb3] [&_[type=text]]:rounded-sm
    [&_button]:rounded-[3px] [&_button]:border [&_button]:border-[#707070] [&_button]:bg-linear-to-b [&_button]:from-[#f2f2f2] [&_button]:to-[#cfcfcf]">
    <div class="h-[28px] flex items-start">
      <svg viewBox="0 0 16 16" class="ml-px mt-[6px] size-4 shrink-0"><path d="M0 0h16v16H0z" fill="#b4b4b4" /><path d="M0 4l5-3h10l1 3-4 3v3h3l-1 3-5 3H1l-1-4 4-2V7H1z" fill="#111" /><path d="M2 4l4-2h8l-4 3v5l3 1-4 3H3l4-3V6z" fill="#f21b1b" /></svg>
      <h2 class="ml-[5px] mt-1.5 text-[12px] leading-4 whitespace-nowrap">Calculations - BS-EN 1993-1:2005/NA:2008...</h2>
      <div class="ml-auto w-[103px] shrink-0 h-[19px] flex border border-t-0 border-[#aaa] rounded-b divide-x divide-[#bbb]">
        <span class="w-7 grid place-items-center"><i class="w-3 h-[5px] border border-[#556] bg-white"></i></span>
        <span class="w-7 grid place-items-center"><i class="w-3 h-[10px] border border-[#bbb] grid place-items-center"><i class="w-1.5 h-1 border border-[#bbb]"></i></i></span>
        <span class="flex-1 grid place-items-center"><svg class="w-3 h-[10px] opacity-40"><use href="#cross" /></svg></span>
      </div>
    </div>
    <div class="h-[255px] px-[5px] pt-0.5 border border-[#666] bg-[#f0f0f0] [&_fieldset_.list]:w-[45px] [&_fieldset_.list]:h-4 [&_fieldset_.list]:ml-2 [&_fieldset_.list]:leading-[13px]">
      <fieldset class="pb-[3px]">
        <legend>Verification options</legend>
        <div class="-mt-px h-[22px] flex items-center"><label for="member"><input type="radio" name="verify" checked aria-label="Member verification" />Member verification:</label><input id="member" type="text" value="1to36 41to59 64to207" /><button type="button" class="list">List</button></div>
        <div class="h-[23px] flex items-center"><label for="group"><input type="radio" name="verify" aria-label="Code group verification" />Code group verification:</label><input id="group" type="text" /><button type="button" class="list">List</button></div>
        <div class="h-[22px] flex items-center"><label for="design"><input type="radio" name="verify" aria-label="Code group design" />Code group design:</label><input id="design" type="text" /><button type="button" class="list">List</button></div>
        <div class="h-[23px] flex items-center"><label class="text-[#838383]"><input type="checkbox" disabled />Optimization</label><button type="button" class="w-[122px] h-[19px]">Options</button></div>
      </fieldset>
      <fieldset class="pb-[3px]">
        <legend>Limit states</legend>
        <div class="-mt-px h-[26px] flex items-center"><label for="uls" class="relative"><input type="checkbox" checked aria-label="ULS" /><svg class="absolute left-0 size-[13px] pointer-events-none"><use href="#tick" /></svg>ULS:</label><input id="uls" type="text" value="1to12 27" /><button type="button" class="list">List</button></div>
        <div class="h-[26px] flex items-center"><label for="sls" class="relative"><input type="checkbox" checked aria-label="SLS" /><svg class="absolute left-0 size-[13px] pointer-events-none"><use href="#tick" /></svg>SLS:</label><input id="sls" type="text" value="1to7 15to24By3" /><button type="button" class="list">List</button></div>
      </fieldset>
      <fieldset class="pb-[3px]">
        <legend>Calculation archive</legend>
        <div class="h-6 flex items-center"><label class="relative"><input type="checkbox" checked /><svg class="absolute left-0 size-[13px] pointer-events-none"><use href="#tick" /></svg>Save calculation results</label><button type="button" class="w-[130px] h-[19px]">Results storage</button></div>
      </fieldset>
      <div class="mt-[5px] px-[5px] flex justify-between [&>button]:w-[73px] [&>button]:h-[21px]">
        <button type="submit">OK</button>
        <button type="button">Configuration</button>
        <button type="button">Calculations</button>
        <button type="button">Help</button>
      </div>
    </div>
  </form>

  <script>
    const columns = [
      ["Case/Mode"], ["Frequency", "(Hz)"], ["Period (sec)"],
      ["Rel.mas.UX", "(%)"], ["Rel.mas.UY", "(%)"], ["Rel.mas.UZ", "(%)"],
      ["Cur.mas.UX", "(%)"], ["Cur.mas.UY", "(%)"], ["Cur.mas.UZ", "(%)"],
      ["Total mass UX", "(kg)"], ["Total mass UY", "(kg)"], ["Total mass UZ", "(kg)"],
    ];
    const modes = [
      ["0.21", "4.82", "12.58", "8.88", "0.00", "12.58", "8.88", "0.00"],
      ["0.89", "1.13", "18.64", "64.78", "0.00", "6.06", "55.90", "0.00"],
      ["1.02", "0.98", "64.21", "65.42", "0.00", "45.57", "0.65", "0.00"],
      ["1.16", "0.86", "69.29", "69.12", "0.00", "5.08", "3.70", "0.00"],
      ["3.13", "0.32", "70.22", "69.13", "0.00", "0.92", "0.01", "0.00"],
      ["4.09", "0.24", "71.49", "85.30", "0.00", "1.27", "16.17", "0.00"],
      ["5.42", "0.18", "85.50", "85.80", "0.00", "14.01", "0.50", "0.00"],
      ["5.73", "0.17", "86.07", "85.88", "0.00", "0.57", "0.07", "0.00"],
      ["6.89", "0.15", "86.07", "85.88", "3.34", "0.00", "0.00", "3.34"],
      ["6.90", "0.15", "86.07", "85.88", "6.68", "0.00", "0.00", "3.34"],
    ];
    const mass = "5935020.20";

    document.getElementById("modesHead").innerHTML = "<tr>" + columns.map((c) =>
      `<th class="h-[49px] p-0 bg-[#c0c0c0] border border-l-white border-t-white border-r-black border-b-black font-bold whitespace-nowrap">${c.join("<br>")}</th>`
    ).join("") + "</tr>";

    document.getElementById("modesBody").innerHTML = modes.map((row, i) =>
      `<tr><th class="h-4 p-0 text-left bg-[#c0c0c0] border border-l-white border-t-white border-r-black border-b-black"><span class="inline-block w-[59px] pl-[29px]">5/</span>${i + 1}</th>` +
      row.concat(mass, mass, mass).map((v) =>
        `<td class="h-4 p-0 pr-[3px] text-right bg-[#e0e0e0] border-r border-b border-[#6a6a6a]">${v}</td>`
      ).join("") + "</tr>"
    ).join("");
  </script>
</body>
</html>
